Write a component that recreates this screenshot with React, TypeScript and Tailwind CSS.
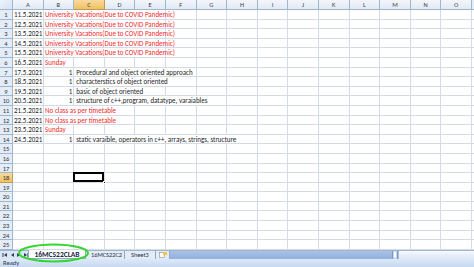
import React from "react";

type Row = { date?: string; num?: string; text?: string; red?: boolean; span?: number };

const rows: Row[] = [
  { date: "11.5.2021", red: true, text: "University Vacations(Due to COVID Pandemic)", span: 4 },
  { date: "12.5.2021", red: true, text: "University Vacations(Due to COVID Pandemic)", span: 4 },
  { date: "13.5.2021", red: true, text: "University Vacations(Due to COVID Pandemic)", span: 4 },
  { date: "14.5.2021", red: true, text: "University Vacations(Due to COVID Pandemic)", span: 4 },
  { date: "15.5.2021", red: true, text: "University Vacations(Due to COVID Pandemic)", span: 4 },
  { date: "16.5.2021", red: true, text: "Sunday", span: 1 },
  { date: "17.5.2021", num: "1", text: "Procedural and object oriented approach", span: 4 },
  { date: "18.5.2021", num: "1", text: "characterstics of object oriented", span: 4 },
  { date: "19.5.2021", num: "1", text: "basic of object oriented", span: 3 },
  { date: "20.5.2021", num: "1", text: "structure of c++,program, datatype, varaiables", span: 5 },
  { date: "21.5.2021", red: true, text: "No class as per timetable", span: 3 },
  { date: "22.5.2021", red: true, text: "No class as per timetable", span: 3 },
  { date: "23.5.2021", red: true, text: "Sunday", span: 1 },
  { date: "24.5.2021", num: "1", text: "static varaible, operators in c++, arrays, strings, structure", span: 6 },
];

const cols = ["A", "B", "C", "D", "E", "F", "G", "H", "I", "J", "K", "L", "M", "N", "O"];

const spanCls: Record<number, string> = {
  1: "",
  2: "col-span-2",
  3: "col-span-3",
  4: "col-span-4",
  5: "col-span-5",
  6: "col-span-6",
};

const gridCls = "grid grid-cols-[13px_repeat(15,30.6px)_1fr]";
const cell = "border-r border-b border-[#d4dbe6] h-[9.6px] leading-[10px] whitespace-nowrap";

function Empty({ selected }: { selected?: boolean }) {
  if (selected)
    return (
      <div className={`${cell} relative`}>
        <div className="absolute -left-px -top-px w-[calc(100%+1px)] h-[calc(100%+1px)] border-2 border-black" />
        <div className="absolute -right-[2px] -bottom-[2px] w-[3px] h-[3px] bg-black border border-white" />
      </div>
    );
  return <div className={cell} />;
}

function SheetRow({ n, row }: { n: number; row?: Row }) {
  const cells: React.ReactNode[] = [];
  let used = 0;
  if (row) {
    cells.push(
      <div key="a" className={`${cell} pl-[1px] text-[#1e1e1e]`}>
        {row.date}
      </div>,
    );
    used = 1;
    if (row.red) {
      cells.push(
        <div key="b" className={`${cell} ${spanCls[row.span ?? 1]} pl-[1.5px] text-[#f02a2a]`}>
          {row.text}
        </div>,
      );
      used += row.span ?? 1;
    } else {
      cells.push(
        <div key="b" className={`${cell} pr-[1px] text-right text-[#1e1e1e]`}>
          {row.num}
        </div>,
      );
      cells.push(
        <div key="c" className={`${cell} ${spanCls[row.span ?? 1]} pl-[2px] text-[#1e1e1e]`}>
          {row.text}
        </div>,
      );
      used += 1 + (row.span ?? 1);
    }
  }
  for (let i = used; i < 15; i++) {
    cells.push(<Empty key={i} selected={n === 18 && i === 2} />);
  }
  const active = n === 18;
  return (
    <div className={gridCls}>
      <div
        className={`h-[9.6px] leading-[10px] text-center text-[6.5px] border-r border-b ${
          active
            ? "bg-gradient-to-b from-[#f9d99f] to-[#f1c15f] border-[#c29b52] text-[#333]"
            : "bg-[#e4ecf7] border-[#9eb6ce] text-[#333]"
        }`}
      >
        {n}
      </div>
      {cells}
      <div className="border-b border-[#d4dbe6]" />
    </div>
  );
}

function NavArrow({ dir, bar }: { dir: "l" | "r"; bar?: boolean }) {
  return (
    <svg width="6" height="6" viewBox="0 0 6 6" className="shrink-0">
      {dir === "l" ? (
        <>
          {bar && <rect x="0.5" y="1" width="1" height="4" fill="#2d3f5c" />}
          <polygon points="5,1 5,5 2,3" fill="#2d3f5c" />
        </>
      ) : (
        <>
          <polygon points="1,1 1,5 4,3" fill="#2d3f5c" />
          {bar && <rect x="4.5" y="1" width="1" height="4" fill="#2d3f5c" />}
        </>
      )}
    </svg>
  );
}

export default function App() {
  return (
    <div className="relative w-[474px] h-[267px] overflow-hidden bg-white flex flex-col font-['Carlito','Liberation_Sans',sans-serif] text-[7px]">
      {/* column headers */}
      <div className={`${gridCls} h-[10px] shrink-0`}>
        <div className="bg-gradient-to-br from-[#eef3fa] to-[#d6e2f1] border-r border-b border-[#9eb6ce]" />
        {cols.map((c) => (
          <div
            key={c}
            className={`h-[10px] leading-[10px] text-center text-[6.5px] border-r border-b ${
              c === "C"
                ? "bg-gradient-to-b from-[#f9d99f] to-[#f1c15f] border-[#c29b52] text-[#333]"
                : "bg-gradient-to-b from-[#f3f6fb] to-[#e1e9f5] border-[#9eb6ce] text-[#444]"
            }`}
          >
            {c}
          </div>
        ))}
        <div className="bg-[#e4ecf7] border-b border-[#9eb6ce]" />
      </div>

      {/* rows */}
      <div className="flex flex-col">
        {Array.from({ length: 25 }, (_, i) => (
          <SheetRow key={i} n={i + 1} row={rows[i]} />
        ))}
      </div>

      {/* sheet tabs */}
      <div className="flex h-[9px] shrink-0 items-stretch bg-[#dbe6f4] border-t border-[#9eb6ce]">
        <div className="flex shrink-0 items-center gap-[1px] pl-[2px] w-[28px]">
          <NavArrow dir="l" bar />
          <NavArrow dir="l" />
          <NavArrow dir="r" />
          <NavArrow dir="r" bar />
        </div>
        <div className="flex shrink-0 items-stretch">
          <div className="shrink-0 bg-white border-x border-b border-[#8ea9cf] -mt-px font-bold text-[7.5px] leading-[9px] text-[#1b2a44] w-[58px] text-center">
            16MCS22CLAB
          </div>
          <div className="shrink-0 w-[39px] pl-[5px] whitespace-nowrap border-r border-[#8ea9cf] text-[6.3px] leading-[8px] text-[#23324d] bg-[#e3ebf6]">
            16MCS22C2
          </div>
          <div className="shrink-0 w-[31px] pl-[6px] whitespace-nowrap border-r border-[#8ea9cf] text-[6.3px] leading-[8px] text-[#23324d] bg-[#e3ebf6]">
            Sheet3
          </div>
          <div className="shrink-0 w-[14px] flex items-center justify-center bg-[#e3ebf6] border-r border-[#8ea9cf]">
            <svg width="8" height="6" viewBox="0 0 8 6">
              <rect x="0.5" y="0.5" width="5" height="5" fill="#fff" stroke="#8a8f99" strokeWidth="0.6" />
              <rect x="4" y="0" width="4" height="3" fill="#f6c343" />
            </svg>
          </div>
        </div>
        <div className="flex-1 bg-gradient-to-b from-[#a9c2e6] to-[#93b0dc]" />
        <div className="shrink-0 w-[6px] bg-[#c9d8ee] border-x border-[#7d97c0] flex items-center justify-center">
          <div className="w-[2px] h-[5px] bg-white" />
        </div>
        <div className="shrink-0 w-[76px] bg-gradient-to-b from-[#f6f8fc] to-[#dde6f3] border-l border-[#aebfd9]" />
      </div>

      {/* status bar */}
      <div className="flex-1 bg-gradient-to-b from-[#dde9f8] to-[#c6d8f0] px-[3px] text-[6.5px] leading-[8px] text-[#2a3a55]">
        Ready
      </div>

      {/* green annotation ellipse */}
      <svg className="absolute left-[17px] top-[243px] pointer-events-none" width="73" height="20" viewBox="0 0 73 20">
        <ellipse cx="36.5" cy="10" rx="34.5" ry="8.5" fill="none" stroke="#35d62f" strokeWidth="2" />
      </svg>
    </div>
  );
}
